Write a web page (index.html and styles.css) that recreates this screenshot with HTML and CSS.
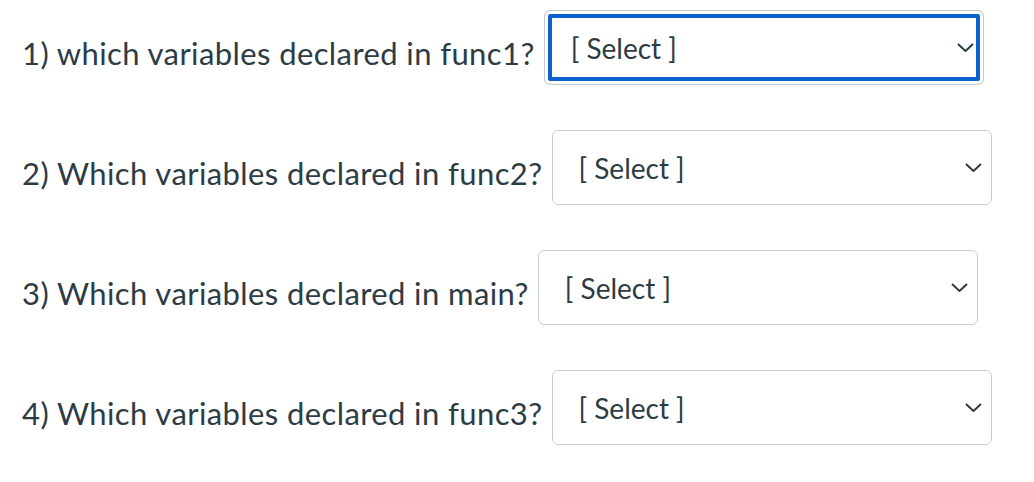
FILE: index.html
```html
<!DOCTYPE html>
<html>
	<head>
		<meta charset="utf-8">
		<title>Quiz</title>
		<link rel="stylesheet" href="styles.css">
	</head>
	<body>
		<div class="preguntas">
			<div class="fila">
				<span class="texto">1) which variables declared in func1?</span>
				<div class="selector activo" role="combobox" tabindex="0">
					<span>[ Select ]</span>
					<svg class="flecha" width="17" height="9" viewBox="0 0 17 9"><path d="M1 1 L8.5 8 L16 1" fill="none" stroke="#2d3b45" stroke-width="2"/></svg>
				</div>
			</div>
			<div class="fila">
				<span class="texto">2) Which variables declared in func2?</span>
				<div class="selector" role="combobox" tabindex="0">
					<span>[ Select ]</span>
					<svg class="flecha" width="17" height="9" viewBox="0 0 17 9"><path d="M1 1 L8.5 8 L16 1" fill="none" stroke="#2d3b45" stroke-width="2"/></svg>
				</div>
			</div>
			<div class="fila">
				<span class="texto">3) Which variables declared in main?</span>
				<div class="selector" role="combobox" tabindex="0">
					<span>[ Select ]</span>
					<svg class="flecha" width="17" height="9" viewBox="0 0 17 9"><path d="M1 1 L8.5 8 L16 1" fill="none" stroke="#2d3b45" stroke-width="2"/></svg>
				</div>
			</div>
			<div class="fila">
				<span class="texto">4) Which variables declared in func3?</span>
				<div class="selector" role="combobox" tabindex="0">
					<span>[ Select ]</span>
					<svg class="flecha" width="17" height="9" viewBox="0 0 17 9"><path d="M1 1 L8.5 8 L16 1" fill="none" stroke="#2d3b45" stroke-width="2"/></svg>
				</div>
			</div>
		</div>
	</body>
</html>
```

FILE: styles.css
```css
* {
    margin: 0;
    padding: 0;
    box-sizing: border-box;
}

body {
    background-color: #ffffff;
    color: #2d3b45;
    font-family: Lato, "Liberation Sans", sans-serif;
}

/* lista de preguntas */
.preguntas {
    display: flex;
    flex-direction: column;
    gap: 45px;
    padding: 10px 0 0 22px;
}

.fila {
    display: flex;
    align-items: flex-start;
    gap: 9px;
}

.texto {
    font-size: 31px;
    letter-spacing: 0.4px;
    line-height: 37px;
    padding-top: 25px;
    white-space: nowrap;
}

/* caja de seleccion */
.selector {
    display: flex;
    justify-content: space-between;
    align-items: center;
    width: 440px;
    height: 75px;
    padding: 0 9px 0 26px;
    border: 1px solid #c7cdd1;
    border-radius: 6px;
    background-color: #ffffff;
    font-size: 28px;
    line-height: 34px;
    outline: none;
}

.selector.activo {
    box-shadow: inset 0 0 0 3px #ffffff, inset 0 0 0 7px #0b62cc;
}

.flecha {
    display: block;
}
```
